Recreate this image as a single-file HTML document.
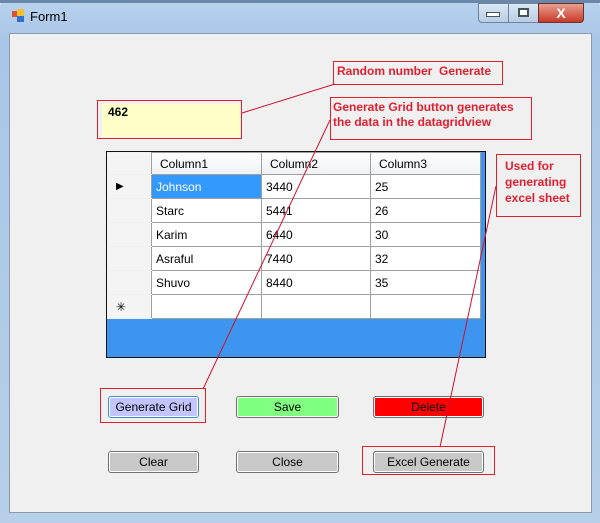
<!DOCTYPE html>
<html><head><style>
body{margin:0;width:600px;height:523px;overflow:hidden;background:#fff;font-family:"Liberation Sans",sans-serif;position:relative}
.a{position:absolute}
.btn{position:absolute;border:1px solid #707070;border-radius:3px;font-size:12px;text-align:center;line-height:21px;box-shadow:inset 0 0 0 1px #fff;box-sizing:border-box;height:22px;color:#000}
.note{position:absolute;border:1px solid #e02030;color:#e02030;font-weight:bold;font-size:12px;line-height:15px;padding:2px 3px;box-sizing:border-box;font-family:"Liberation Sans",sans-serif}
table{border-collapse:collapse;font-size:12px}
td{border:1px solid #a0a0a0;height:24px;padding:0 0 0 4px;box-sizing:border-box}
td.h{border-color:#f0f0f0 #a0a0a0 #f0f0f0 #f4f4f4;background:#f4f4f4}
</style></head><body>
<div class="a" style="left:0;top:0;width:600px;height:523px;background:linear-gradient(#b9d3ee,#a8c6e6 40px,#b7cfe8);border-radius:6px 6px 0 0"></div>
<div class="a" style="left:0;top:0;width:600px;height:3px;background:#6a86a8"></div>
<div class="a" style="left:12px;top:11px;width:6px;height:6px;background:#e05030"></div>
<div class="a" style="left:17px;top:9px;width:7px;height:7px;background:#f0c030"></div>
<div class="a" style="left:17px;top:16px;width:7px;height:6px;background:#3070d0"></div>
<div class="a" style="left:30px;top:9px;font-size:13px">Form1</div>
<div class="a" style="left:478px;top:3px;width:29px;height:18px;border:1px solid #6d84a0;border-radius:0 0 0 4px;background:linear-gradient(#dbe7f4,#bacde3)"></div>
<div class="a" style="left:486px;top:12px;width:12px;height:3px;border:1px solid #455;background:#fff"></div>
<div class="a" style="left:508px;top:3px;width:29px;height:18px;border:1px solid #6d84a0;background:linear-gradient(#dbe7f4,#bacde3)"></div>
<div class="a" style="left:518px;top:8px;width:7px;height:5px;border:2px solid #455;background:#fff"></div>
<div class="a" style="left:538px;top:3px;width:44px;height:18px;border:1px solid #6d3030;border-radius:0 0 4px 0;background:linear-gradient(#e8a090,#c83a28);color:#fff;font-weight:bold;text-align:center;font-size:14px;line-height:18px">X</div>
<div class="a" style="left:9px;top:33px;width:581px;height:478px;background:#f0f0f0;border:1px solid #8a9ab0"></div>

<div class="a" style="left:102px;top:104px;width:138px;height:33px;background:#ffffc8"></div>
<div class="a" style="left:108px;top:105px;font-weight:bold;font-size:12px">462</div>
<div class="a" style="left:97px;top:100px;width:145px;height:39px;border:1px solid #e02030;box-sizing:border-box"></div>

<div class="a" style="left:106px;top:151px;width:380px;height:207px;background:#3d95f0;border:1px solid #111;box-sizing:border-box"></div>
<table class="a" style="left:107px;top:152px;width:374px;background:#fff">
<tr style="background:linear-gradient(#fff,#eef0f3)"><td class="h" style="width:44px;height:22px"></td><td style="width:110px;height:22px;padding-left:8px">Column1</td><td style="width:109px;height:22px;padding-left:8px">Column2</td><td style="height:22px;padding-left:8px">Column3</td></tr>
<tr><td class="h" style="padding-left:8px;font-size:10px">&#9654;</td><td style="background:#3399ff;color:#fff">Johnson</td><td>3440</td><td>25</td></tr>
<tr><td class="h"></td><td>Starc</td><td>5441</td><td>26</td></tr>
<tr><td class="h"></td><td>Karim</td><td>6440</td><td>30</td></tr>
<tr><td class="h"></td><td>Asraful</td><td>7440</td><td>32</td></tr>
<tr><td class="h"></td><td>Shuvo</td><td>8440</td><td>35</td></tr>
<tr><td class="h" style="padding-left:8px">&#10035;</td><td></td><td></td><td></td></tr>
</table>

<div class="btn" style="left:108px;top:396px;width:91px;background:#c4c4ff;border-color:#3c8ed0">Generate Grid</div>
<div class="btn" style="left:236px;top:396px;width:103px;background:#80ff80">Save</div>
<div class="btn" style="left:373px;top:396px;width:111px;background:#ff0000">Delete</div>
<div class="btn" style="left:108px;top:451px;width:91px;background:#c8c8c8">Clear</div>
<div class="btn" style="left:236px;top:451px;width:103px;background:#c8c8c8">Close</div>
<div class="btn" style="left:373px;top:451px;width:111px;background:#c8c8c8">Excel Generate</div>
<div class="a" style="left:100px;top:388px;width:106px;height:35px;border:1px solid #e02030;box-sizing:border-box"></div>
<div class="a" style="left:362px;top:446px;width:133px;height:29px;border:1px solid #e02030;box-sizing:border-box"></div>

<div class="note" style="left:333px;top:61px;width:170px;height:24px">Random number&nbsp; Generate</div>
<div class="note" style="left:330px;top:97px;width:202px;height:43px;padding-left:2px">Generate Grid button generates the data in the datagridview</div>
<div class="note" style="left:496px;top:154px;width:85px;height:63px;line-height:16px;padding-left:8px;padding-top:3px">Used for generating excel sheet</div>

<svg class="a" style="left:0;top:0" width="600" height="523"><g stroke="#d01030" stroke-width="1" fill="none">
<line x1="242" y1="113" x2="335" y2="84"/>
<line x1="203" y1="389" x2="330" y2="120"/>
<line x1="440" y1="447" x2="496" y2="186"/>
</g></svg>
</body></html>
